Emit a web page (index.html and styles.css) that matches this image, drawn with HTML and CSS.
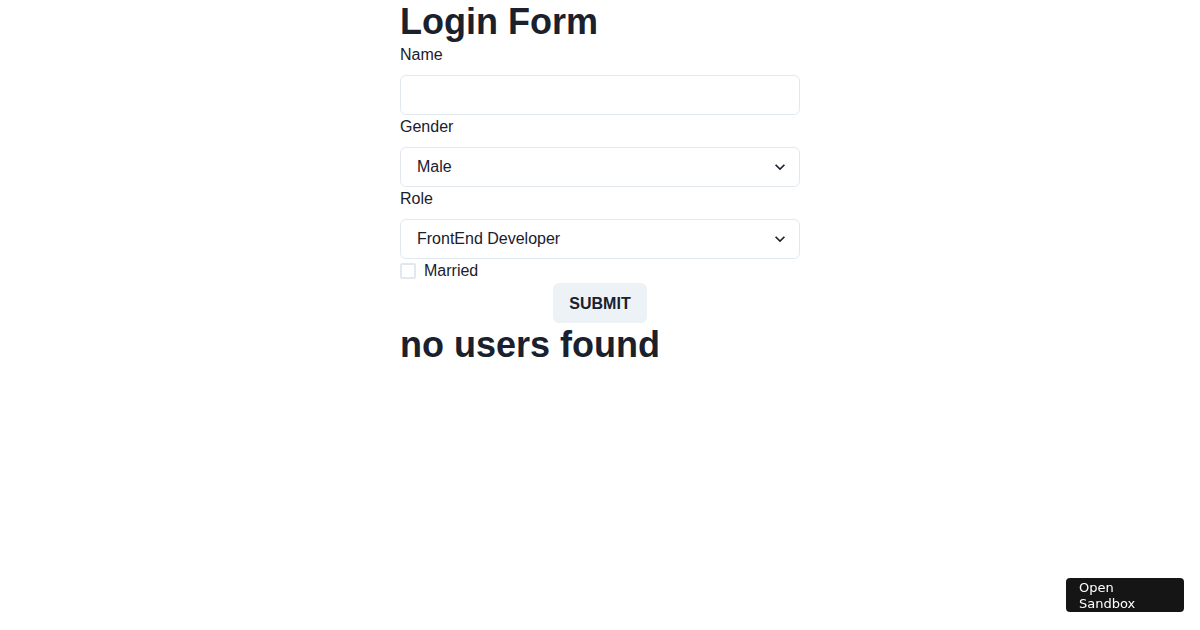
FILE: index.html
```html
<!DOCTYPE html>
<html lang="en">
<head>
    <meta charset="UTF-8">
    <title>Login Form</title>
    <link rel="stylesheet" href="styles.css">
</head>
<body>
<div class="wrap">
    <h2 class="title">Login Form</h2>
    <form class="form">
        <label class="label" for="name">Name</label>
        <input class="input" id="name" type="text">

        <label class="label" for="gender">Gender</label>
        <div class="select_box">
            <select class="select" id="gender">
                <option>Male</option>
                <option>Female</option>
            </select>
            <svg class="chevron" viewBox="0 0 24 24" width="20" height="20"><path fill="currentColor" d="M16.59 8.59L12 13.17 7.41 8.59 6 10l6 6 6-6z"/></svg>
        </div>

        <label class="label" for="role">Role</label>
        <div class="select_box">
            <select class="select" id="role">
                <option>FrontEnd Developer</option>
                <option>BackEnd Developer</option>
            </select>
            <svg class="chevron" viewBox="0 0 24 24" width="20" height="20"><path fill="currentColor" d="M16.59 8.59L12 13.17 7.41 8.59 6 10l6 6 6-6z"/></svg>
        </div>

        <label class="check">
            <span class="check_box"></span>
            <span>Married</span>
        </label>

        <div class="btn_row">
            <button class="btn" type="button">SUBMIT</button>
        </div>
    </form>
    <h2 class="title">no users found</h2>
</div>
<a class="sandbox" href="#">Open Sandbox</a>
</body>
</html>
```

FILE: styles.css
```css
*{
    margin: 0;
    padding: 0;
    box-sizing: border-box;
}
body{
    font-family: "Liberation Sans", Arial, sans-serif;
    font-size: 16px;
    line-height: 1.5;
    color: #1a202c;
    background: #ffffff;
}
.wrap{
    width: 400px;
    margin: 0 auto;
}
.title{
    font-size: 36px;
    line-height: 1.2;
    font-weight: 700;
}
.label{
    display: block;
    margin-bottom: 8px;
    line-height: 24px;
}
.input,
.select{
    display: block;
    width: 100%;
    height: 40px;
    border: 1px solid #e2e8f0;
    border-radius: 6px;
    font-family: inherit;
    font-size: 16px;
    color: #1a202c;
    background: #ffffff;
    padding: 0 16px;
    outline: none;
}
.select_box{
    position: relative;
}
.select{
    appearance: none;
    -webkit-appearance: none;
    padding: 0 32px 2px 16px;
}
.chevron{
    position: absolute;
    right: 10px;
    top: 10px;
    color: #1a202c;
    pointer-events: none;
}
.check{
    display: flex;
    align-items: center;
    line-height: 24px;
}
.check_box{
    width: 16px;
    height: 16px;
    border: 2px solid #e2e8f0;
    border-radius: 2px;
    margin-right: 8px;
}
.btn_row{
    display: flex;
    justify-content: center;
}
.btn{
    height: 40px;
    padding: 2px 16px 0;
    border: none;
    border-radius: 6px;
    background: #edf2f7;
    color: #1a202c;
    font-family: inherit;
    font-size: 16px;
    font-weight: 700;
}
.sandbox{
    position: fixed;
    right: 16px;
    bottom: 18px;
    width: 118px;
    height: 34px;
    padding: 2px 13px 0;
    background: #151515;
    border-radius: 4px;
    color: #ffffff;
    font-family: "DejaVu Sans", sans-serif;
    font-size: 13px;
    line-height: 16px;
    text-decoration: none;
}
```
